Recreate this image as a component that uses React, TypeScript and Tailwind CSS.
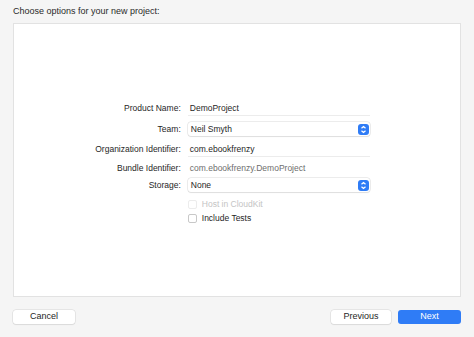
export default function App() {
  return (
    <div className="w-[474px] h-[337px] bg-[#f5f5f5] flex flex-col px-[13px] text-[#262626] font-['Liberation_Sans',sans-serif] text-[8.5px]">
      <div className="h-[23px] flex items-center text-[9px] text-[#2a2a2a]">Choose options for your new project:</div>
      <div className="h-[274px] bg-white border border-[#e2e2e2] flex flex-col items-center justify-center">
        <div className="grid grid-cols-[auto_182px] gap-x-[7px] items-center ml-[-9px] mt-[6px]">
          <span className="text-right">Product Name:</span>
          <div className="h-[15px] flex items-center px-[2px] bg-white border-b border-[#ececec]">DemoProject</div>

          <span className="text-right mt-[6px]">Team:</span>
          <div className="mt-[6px] h-[14px] flex items-center justify-between px-[3px] pr-[1px] bg-white rounded-[3px] shadow-[0_0_0_0.5px_#d9d9d9,0_1px_1px_#e5e5e5]">
            <span>Neil Smyth</span>
            <span className="w-[11px] h-[11px] rounded-[3px] bg-[#2f7cf6] flex items-center justify-center">
              <svg width="7" height="9" viewBox="0 0 7 9" fill="none" stroke="white" strokeWidth="1.2">
                <path d="M1.5 3.3 L3.5 1.5 L5.5 3.3" />
                <path d="M1.5 5.7 L3.5 7.5 L5.5 5.7" />
              </svg>
            </span>
          </div>

          <span className="text-right mt-[6px]">Organization Identifier:</span>
          <div className="mt-[6px] h-[15px] flex items-center px-[2px] bg-white border-b border-[#ececec]">com.ebookfrenzy</div>

          <span className="text-right mt-[4px]">Bundle Identifier:</span>
          <div className="mt-[4px] h-[15px] flex items-center px-[2px] text-[#6e6e6e]">com.ebookfrenzy.DemoProject</div>

          <span className="text-right mt-[2px]">Storage:</span>
          <div className="mt-[2px] h-[14px] flex items-center justify-between px-[3px] pr-[1px] bg-white rounded-[3px] shadow-[0_0_0_0.5px_#d9d9d9,0_1px_1px_#e5e5e5]">
            <span>None</span>
            <span className="w-[11px] h-[11px] rounded-[3px] bg-[#2f7cf6] flex items-center justify-center">
              <svg width="7" height="9" viewBox="0 0 7 9" fill="none" stroke="white" strokeWidth="1.2">
                <path d="M1.5 3.3 L3.5 1.5 L5.5 3.3" />
                <path d="M1.5 5.7 L3.5 7.5 L5.5 5.7" />
              </svg>
            </span>
          </div>

          <span />
          <div className="mt-[6px] flex items-center gap-[5px] text-[#c4c4c4]">
            <span className="w-[9px] h-[9px] rounded-[2px] border border-[#ececec] bg-white" />
            Host in CloudKit
          </div>

          <span />
          <div className="mt-[1px] flex items-center gap-[5px]">
            <span className="w-[9px] h-[9px] rounded-[2px] border border-[#c8c8c8] bg-white" />
            Include Tests
          </div>
        </div>
      </div>
      <div className="flex items-center justify-between mt-[13px]">
        <button className="w-[62px] h-[14px] bg-white rounded-[3px] shadow-[0_0_0_0.5px_#d6d6d6,0_1px_1px_#e0e0e0] text-[9px] text-[#262626]">Cancel</button>
        <div className="flex gap-[7px]">
          <button className="w-[60px] h-[14px] bg-white rounded-[3px] shadow-[0_0_0_0.5px_#d6d6d6,0_1px_1px_#e0e0e0] text-[9px] text-[#262626]">Previous</button>
          <button className="w-[63px] h-[14px] bg-[#2f7cf6] rounded-[3px] text-[9px] text-white">Next</button>
        </div>
      </div>
    </div>
  );
}
